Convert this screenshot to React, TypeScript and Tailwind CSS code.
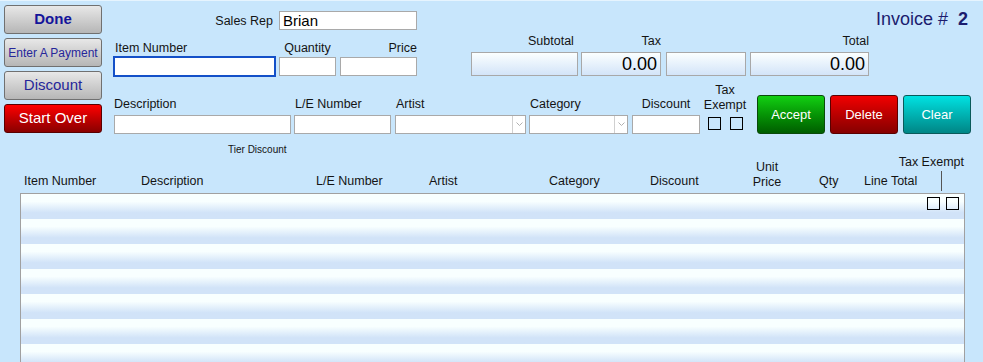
import React from 'react';

const labelCls = 'text-[12.5px] leading-[14px] text-[#141414] whitespace-nowrap';
const inputCls = 'h-[19px] bg-white border border-[#a9a9a9]';
const boxCls =
  'h-[24px] border border-[#a8a8a8] bg-gradient-to-b from-[#fbffff] to-[#d3e4f8] text-right text-[18px] leading-[22px] pr-[3px] text-black';

function SideButton({ children, className }: { children: React.ReactNode; className: string }) {
  return (
    <div
      className={`h-[29px] w-[98px] rounded-[3px] border flex items-center justify-center whitespace-nowrap ${className}`}
    >
      {children}
    </div>
  );
}

function ActionButton({ label, className }: { label: string; className: string }) {
  return (
    <div
      className={`w-[68px] h-[39px] rounded-[3px] border flex items-center justify-center text-white text-[13px] ${className}`}
    >
      {label}
    </div>
  );
}

function Select({ width }: { width: string }) {
  return (
    <div className={`${inputCls} ${width} flex justify-end`}>
      <div className="w-[13px] h-full border-l border-[#d0d0d0] flex items-center justify-center">
        <svg width="7" height="5" viewBox="0 0 7 5" fill="none" stroke="#b0b0b0" strokeWidth="1">
          <path d="M0.5 0.5 L3.5 3.5 L6.5 0.5" />
        </svg>
      </div>
    </div>
  );
}

function Check() {
  return <div className="w-[13px] h-[13px] border border-black bg-transparent" />;
}

export default function App() {
  const rows = Array.from({ length: 7 });

  return (
    <div className="w-[983px] h-[362px] overflow-hidden bg-[#c8e6fc] border-t border-[#e6f4fe] flex flex-col font-['Liberation_Sans',Arial,sans-serif] text-[#141414]">
      {/* Top area */}
      <div className="flex h-[139px] shrink-0">
        {/* Left buttons */}
        <div className="w-[113px] pl-[4px] pt-[4px] flex flex-col gap-[4px]">
          <SideButton className="border-[#707070] bg-gradient-to-b from-[#e8e8e8] to-[#b6b6b6] text-[#14149a] font-bold text-[15px]">
            Done
          </SideButton>
          <SideButton className="border-[#707070] bg-gradient-to-b from-[#e8e8e8] to-[#b6b6b6] text-[#26269a] text-[12px]">
            Enter A Payment
          </SideButton>
          <SideButton className="border-[#707070] bg-gradient-to-b from-[#e8e8e8] to-[#b6b6b6] text-[#26269a] text-[15px]">
            Discount
          </SideButton>
          <SideButton className="border-[#5a0000] bg-gradient-to-b from-[#ff0000] to-[#8a0000] text-white text-[15px]">
            Start Over
          </SideButton>
        </div>

        {/* Form */}
        <div className="flex-1 flex flex-col">
          {/* Row 1 */}
          <div className="flex items-center pt-[10px] h-[19px] box-content">
            <div className={`${labelCls} w-[166px] text-right pr-[6px]`}>Sales Rep</div>
            <div className={`${inputCls} w-[138px] text-[15px] leading-[17px] pl-[3px] text-black`}>Brian</div>
            <div className="ml-auto pr-[15px] text-[18px] text-[#1c1c6e] whitespace-nowrap -mt-[2px]">
              Invoice #&nbsp; <span className="font-bold">2</span>
            </div>
          </div>

          {/* Row 2 */}
          <div className="flex items-end h-[47px]">
            <div className="w-[163px] flex flex-col">
              <div className={`${labelCls} pl-[2px] mb-[1px]`}>Item Number</div>
              <div className="h-[21px] bg-white border-2 border-[#1450c8]" />
            </div>
            <div className="ml-[3px] w-[57px] flex flex-col mb-[1px]">
              <div className={`${labelCls} text-center mb-[2px]`}>Quantity</div>
              <div className={inputCls} />
            </div>
            <div className="ml-[4px] w-[77px] flex flex-col mb-[1px]">
              <div className={`${labelCls} text-right mb-[2px]`}>Price</div>
              <div className={inputCls} />
            </div>
            <div className="ml-[54px] w-[107px] flex flex-col mb-[1px]">
              <div className={`${labelCls} pl-[57px] mb-[4px]`}>Subtotal</div>
              <div className={boxCls} />
            </div>
            <div className="ml-[3px] w-[80px] flex flex-col mb-[1px]">
              <div className={`${labelCls} text-right pr-[0px] mb-[4px]`}>Tax</div>
              <div className={boxCls}>0.00</div>
            </div>
            <div className={`${boxCls} ml-[5px] w-[80px] mb-[1px]`} />
            <div className="ml-[4px] w-[119px] flex flex-col mb-[1px]">
              <div className={`${labelCls} text-right mb-[4px]`}>Total</div>
              <div className={boxCls}>0.00</div>
            </div>
          </div>

          {/* Row 3 */}
          <div className="flex items-end h-[57px] pl-[1px]">
            <div className="w-[177px] flex flex-col">
              <div className={`${labelCls} mb-[4px]`}>Description</div>
              <div className={inputCls} />
            </div>
            <div className="ml-[3px] w-[97px] flex flex-col">
              <div className={`${labelCls} pl-[1px] mb-[4px]`}>L/E Number</div>
              <div className={inputCls} />
            </div>
            <div className="ml-[4px] w-[131px] flex flex-col">
              <div className={`${labelCls} pl-[1px] mb-[4px]`}>Artist</div>
              <Select width="w-full" />
            </div>
            <div className="ml-[3px] w-[99px] flex flex-col">
              <div className={`${labelCls} pl-[1px] mb-[4px]`}>Category</div>
              <Select width="w-full" />
            </div>
            <div className="ml-[4px] w-[68px] flex flex-col">
              <div className={`${labelCls} text-center mb-[4px]`}>Discount</div>
              <div className={inputCls} />
            </div>
            <div className="ml-[4px] w-[42px] flex flex-col items-center mb-[4px]">
              <div className="text-[12.5px] leading-[15px] text-center text-[#141414] mb-[4px]">
                Tax
                <br />
                Exempt
              </div>
              <div className="flex gap-[9px]">
                <Check />
                <Check />
              </div>
            </div>
            <div className="ml-[11px] flex gap-[5px]">
              <ActionButton label="Accept" className="border-[#0a4a0a] bg-gradient-to-b from-[#12d012] to-[#005e00]" />
              <ActionButton label="Delete" className="border-[#5a0000] bg-gradient-to-b from-[#f20000] to-[#860000]" />
              <ActionButton label="Clear" className="border-[#0a5a5a] bg-gradient-to-b from-[#00e2e2] to-[#008686]" />
            </div>
          </div>
        </div>
      </div>

      {/* Tier discount */}
      <div className="h-[12px] mt-[4px] pl-[228px] text-[10px] leading-[12px] text-[#141414] shrink-0">Tier Discount</div>

      {/* Grid header */}
      <div className="shrink-0 pl-[20px] pr-[19px]">
        <div className="h-[12px] text-right text-[12.5px] leading-[12px] whitespace-nowrap">Tax Exempt</div>
        <div className="h-[25px] flex items-end pb-[5px] text-[12.5px] leading-[14px]">
          <div className="w-[121px] pl-[4px]">Item Number</div>
          <div className="w-[175px]">Description</div>
          <div className="w-[113px]">L/E Number</div>
          <div className="w-[120px]">Artist</div>
          <div className="w-[101px]">Category</div>
          <div className="w-[97px]">Discount</div>
          <div className="w-[40px] text-center leading-[15px] -mb-[2px]">
            Unit
            <br />
            Price
          </div>
          <div className="w-[32px]" />
          <div className="w-[45px]">Qty</div>
          <div className="w-[77px]">Line Total</div>
          <div className="w-px h-[20px] bg-[#555] -mb-[3px]" />
        </div>
      </div>

      {/* Grid */}
      <div className="ml-[20px] w-[945px] flex-1 border border-[#a0a0a0] border-b-0 overflow-hidden">
        {rows.map((_, i) => (
          <div
            key={i}
            className="h-[25px] bg-gradient-to-b from-[#f8ffff] from-[30%] to-[#d1e3f8] to-[75%] flex items-start justify-end pt-[3px] pr-[5px] gap-[6px]"
          >
            {i === 0 && (
              <>
                <Check />
                <Check />
              </>
            )}
          </div>
        ))}
      </div>
    </div>
  );
}
